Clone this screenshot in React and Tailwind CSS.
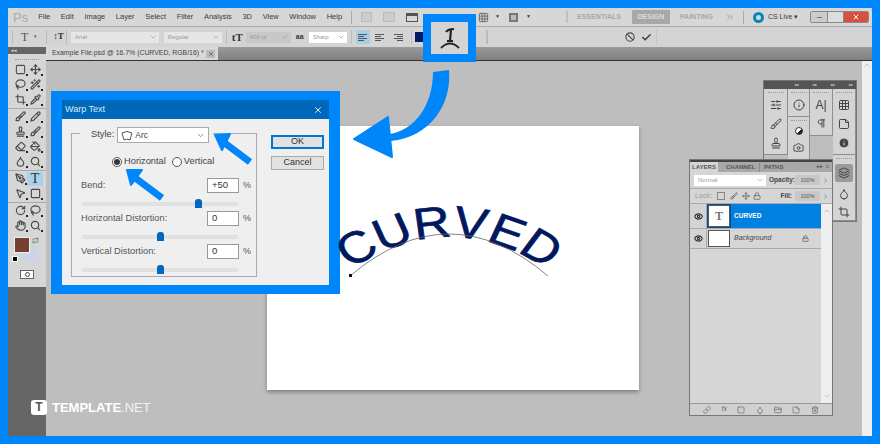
import {
  Check,
  ChevronDown,
  ChevronRight,
  ChevronUp,
  ChevronsRight,
  Ban,
  Lock,
  Move,
  Brush,
  Eye,
  Info,
  Pilcrow,
  X,
  Minus,
  Link,
  FolderClosed,
  StickyNote,
  Trash2,
  Crop,
  Pipette,
  Stamp,
  Eraser,
  PaintBucket,
  Droplet,
  Search,
  Hand,
  Lasso,
  Wand2,
  Pencil,
  PenTool,
  MousePointer2,
  Square,
  RotateCw,
  Camera,
  Layers,
  SlidersHorizontal,
  Grid3x3,
  Repeat,
} from "lucide-react";

const menus = ["File", "Edit", "Image", "Layer", "Select", "Filter", "Analysis", "3D", "View", "Window", "Help"];

const tools = [
  [Square, Move],
  [Lasso, Wand2],
  [Crop, Pipette],
  null,
  [Brush, Pencil],
  [Stamp, Brush],
  [Eraser, PaintBucket],
  [Droplet, Search],
  null,
  [PenTool, "T"],
  [MousePointer2, Square],
  null,
  [RotateCw, Lasso],
  [Hand, Search],
];

const Sep = ({ className = "" }) => <div className={`h-[14px] w-px shrink-0 bg-[#bbb] ${className}`} />;

const Dropdown = ({ label, className }) => (
  <div className={`flex h-[11px] shrink-0 items-center justify-between bg-[#e6e6e6] pl-1 pr-0.5 text-[6px] text-[#9a9a9a] ${className}`}>
    <span>{label}</span>
    <ChevronDown size={8} className="text-[#9a9a9a]" />
  </div>
);

const AlignIcon = ({ className = "items-center" }) => (
  <div className={`flex w-[10px] shrink-0 flex-col gap-px ${className}`}>
    <div className="h-px w-[9px] bg-[#555]" />
    <div className="h-px w-[6px] bg-[#555]" />
    <div className="h-px w-[9px] bg-[#555]" />
    <div className="h-px w-[6px] bg-[#555]" />
  </div>
);

const Slider = ({ thumb }) => (
  <div className="relative mx-[1px] mt-[9px] h-[4px] w-[156px] bg-[#e0e2e2]">
    <div className={`absolute top-[-3px] h-[9px] w-[7px] rounded-t-[3px] bg-[#0068c0] ${thumb}`} />
  </div>
);

const DistortRow = ({ label, value }) => (
  <div className="flex h-[15px] items-center">
    <span className="w-[126px] text-[9.3px] text-[#555]">{label}</span>
    <div className="flex h-[15px] w-[32px] items-center border border-[#999] bg-white px-[4px] text-[9.5px] text-[#333]">{value}</div>
    <span className="ml-[4px] text-[9px] text-[#555]">%</span>
  </div>
);

const DockCell = ({ children, className = "" }) => (
  <div className={`flex flex-col items-center gap-[7px] border-r border-b border-[#8f8f8f] bg-[#d4d4d4] pt-[3px] text-[#444] ${className}`}>
    <div className="mb-[-1px] h-px w-[16px] border-t border-dotted border-[#999]" />
    {children}
  </div>
);

const LayerRow = ({ active, name, italic, children }) => (
  <div className={`flex items-center border-b border-[#aaa] ${active ? "h-[25px] bg-[#0080e0]" : "h-[20px]"}`}>
    <div className="flex h-full w-[17px] items-center justify-center border-r border-[#aaa] bg-[#d4d4d4]">
      <Eye size={9} strokeWidth={3} className="text-[#333]" />
    </div>
    <div className={`ml-[1px] flex w-[22px] items-center justify-center border border-[#555] bg-white font-['Liberation_Serif',serif] text-[12px] font-bold text-[#777] ${active ? "h-[22px] outline outline-[#0a4f90]" : "h-[17px]"}`}>
      {active ? "T" : ""}
    </div>
    <span className={`ml-[4px] flex-1 ${active ? "text-[6.5px] font-bold text-white" : ""} ${italic ? "text-[7px] italic text-[#444]" : ""}`}>{name}</span>
    {children}
  </div>
);

export default function App() {
  return (
    <div className="h-[444px] w-[880px] overflow-hidden bg-[#0086fb] p-[8px] font-['Liberation_Sans',sans-serif]">
      <div className="relative flex h-[428px] w-[864px] flex-col overflow-hidden bg-[#bebebe]">
        {/* Menu bar */}
        <div className="flex h-[18px] items-center whitespace-nowrap bg-[#d7d7d7] text-[7.5px] text-[#3c3c3c]">
          <span className="ml-[5px] mr-[10px] text-[13px] leading-none text-[#aaa]">Ps</span>
          <div className="flex gap-[10.6px] pr-[9px]">
            {menus.map((m) => (
              <span key={m}>{m}</span>
            ))}
          </div>
          <div className="h-[13px] w-px shrink-0 bg-[#aaa]" />
          <div className="ml-[9px] h-[10px] w-[11px] shrink-0 border border-[#bbb] bg-[#ccc]" />
          <div className="ml-[11px] h-[10px] w-[12px] shrink-0 border border-[#bbb] bg-[#ccc]" />
          <div className="ml-[11px] h-[9px] w-[12px] shrink-0 border border-[#555] border-t-[3px]" />
          <Grid3x3 size={11} className="ml-[60px] shrink-0 text-[#666]" />
          <span className="ml-[6px] text-[5px]">▼</span>
          <div className="ml-[9px] h-[9px] w-[9px] shrink-0 border-2 border-[#777] bg-[#bbb]" />
          <span className="ml-[8px] text-[5px]">▼</span>
          <div className="ml-[35px] h-[12px] w-[2px] shrink-0 bg-[#c0c0c0]" />
          <span className="ml-[9px] text-[7px] font-bold text-[#a8a8a8]">ESSENTIALS</span>
          <span className="ml-[11px] flex h-[14px] w-[38px] shrink-0 items-center justify-center bg-[#a8a8a8] text-[7px] font-bold text-[#ddd]">DESIGN</span>
          <span className="ml-[10px] text-[7px] font-bold text-[#a8a8a8]">PAINTING</span>
          <ChevronsRight size={10} className="ml-[12px] shrink-0 text-[#999]" />
          <div className="ml-[8px] h-[13px] w-px shrink-0 bg-[#aaa]" />
          <div className="ml-[9px] h-[11px] w-[11px] shrink-0 rounded-full border-[3px] border-[#0a84b8]" />
          <span className="ml-[4px] text-[7px]">CS Live ▾</span>
          <div className="ml-auto mr-[3px] flex h-[12px] w-[59px] shrink-0 overflow-hidden rounded-[2px] border border-[#888]">
            <div className="flex w-[16px] items-end justify-center bg-[#ccc] pb-[1px]">
              <Minus size={7} />
            </div>
            <div className="w-[17px] border-x border-[#888] bg-[#ddd]" />
            <div className="flex flex-1 items-center justify-center bg-[#d85040]">
              <X size={8} strokeWidth={3} className="text-white" />
            </div>
          </div>
        </div>

        {/* Options bar */}
        <div className="flex h-[21px] items-center whitespace-nowrap border-t border-[#aaa] bg-[#d4d4d4] text-[#555]">
          <Sep className="ml-[4px]" />
          <span className="ml-[8px] font-['Liberation_Serif',serif] text-[12px]">T</span>
          <span className="ml-[6px] text-[5px]">▾</span>
          <Sep className="ml-[9px]" />
          <span className="ml-[6px] font-['Liberation_Serif',serif] text-[9px] font-bold text-[#333]">↕T</span>
          <Sep className="ml-[2px]" />
          <Dropdown label="Arial" className="ml-[4px] w-[88px]" />
          <Dropdown label="Regular" className="ml-[5px] w-[58px]" />
          <Sep className="ml-[4px]" />
          <span className="ml-[5px] font-['Liberation_Serif',serif] text-[11px] font-bold text-[#333]">tT</span>
          <Dropdown label="400 pt" className="ml-[3px] w-[45px] !bg-[#c8c8c8]" />
          <span className="ml-[5px] text-[7px] font-bold text-[#333]">aa</span>
          <Dropdown label="Sharp" className="ml-[5px] w-[38px] !bg-white" />
          <Sep className="ml-[4px]" />
          <div className="ml-[4px] flex h-[14px] w-[14px] shrink-0 items-center justify-center bg-[#a9cfe6]">
            <AlignIcon className="items-start" />
          </div>
          <AlignIcon className="ml-[5px]" />
          <AlignIcon className="ml-[8px] items-end" />
          <Sep className="ml-[8px]" />
          <div className="ml-[3px] h-[10px] w-[14px] shrink-0 bg-[#001a66]" />
          <div className="ml-[57px] h-[14px] w-[2px] shrink-0 bg-[#bbb]" />
          <Ban size={10} strokeWidth={2.6} className="ml-[137px] shrink-0 text-[#444]" />
          <Check size={11} strokeWidth={3.4} className="ml-[6px] shrink-0 text-[#444]" />
          <div className="ml-[4px] h-[16px] w-px shrink-0 bg-[#c4c4c4]" />
        </div>

        {/* Body */}
        <div className="flex min-h-0 flex-1">
          <aside className="flex w-[38px] shrink-0 flex-col bg-[#666]">
            <div className="flex h-[7px] items-center px-[3px] text-[5px] leading-none text-[#ddd]">◂◂</div>
            <div className="flex h-[233px] flex-col items-center bg-[#d6d6d6] pt-[5px]">
              <div className="mb-[2px] h-px w-[24px] border-t border-dotted border-[#999]" />
              {tools.map((row, i) =>
                row ? (
                  <div key={i} className="flex h-[15px] w-[34px] items-center justify-between pl-[3px] pr-[1px]">
                    {row.map((Icon, j) =>
                      Icon === "T" ? (
                        <div key={j} className="flex h-[14px] w-[17px] items-center justify-center bg-[#a8d2e8] font-['Liberation_Serif',serif] text-[14px] text-[#333]">
                          T
                        </div>
                      ) : (
                        <div key={j} className="relative flex w-[15px] justify-center">
                          <Icon size={11} strokeWidth={2.5} strokeDasharray={i === 0 && j === 0 ? "2 2" : undefined} className="text-[#4a4a4a]" />
                          <div className="absolute bottom-[-1px] right-0 h-[2px] w-[2px] bg-[#222]" />
                        </div>
                      )
                    )}
                  </div>
                ) : (
                  <div key={i} className="mt-[1px] h-px w-full bg-[#aaa]" />
                )
              )}
              <div className="relative mt-[4px] h-[26px] w-[30px] shrink-0">
                <div className="absolute left-[9px] top-[8px] h-[16px] w-[17px] bg-[#ccd4e8]" />
                <div className="absolute left-[2px] top-0 h-[16px] w-[16px] border border-[#eee] bg-[#744030]" />
                <div className="absolute left-0 top-[19px] h-[6px] w-[6px] border border-white bg-black" />
                <Repeat size={7} className="absolute left-[20px] top-0 text-[#555]" />
              </div>
              <div className="mt-[7px] flex h-[9px] w-[14px] items-center justify-center border border-[#666] bg-white">
                <div className="h-[5px] w-[5px] rounded-full border border-[#444]" />
              </div>
            </div>
          </aside>

          <main className="flex min-w-0 flex-1 flex-col">
            <div className="flex h-[13px] bg-gradient-to-b from-[#9a9a9a] to-[#808080]">
              <div className="flex w-[172px] items-center justify-between bg-[#d8d8d8] pl-[6px] pr-[3px] text-[6.9px] whitespace-nowrap text-[#444]">
                <span>Example File.psd @ 16.7% (CURVED, RGB/16) *</span>
                <div className="flex h-[8px] w-[9px] items-center justify-center bg-[#bbb]">
                  <X size={6} strokeWidth={3} className="text-[#555]" />
                </div>
              </div>
            </div>
            <div className="h-px bg-[#333]" />
            <div className="flex min-h-0 flex-1 items-start justify-end">
              <div className="h-full w-[10px] bg-[#efefef]">
                <ChevronUp size={8} className="ml-[1px] text-[#aaa]" />
              </div>
            </div>
          </main>
        </div>

        {/* Canvas document */}
        <div className="absolute left-[259px] top-[118px] h-[264px] w-[372px] bg-white shadow-[0_2px_4px_rgba(0,0,0,0.35)]" />

        {/* Callout with warp icon */}
        <div className="absolute left-[415px] top-[6px] flex h-[48px] w-[53px] items-center justify-center border-[8px] border-[#0086fb] bg-[#d4d4d4]">
          <svg width="22" height="24" viewBox="0 0 22 24" className="text-[#222]">
            <path d="M7 6 Q9 3 15 3 M12 3 L11 15 M8 15 L14 15" stroke="currentColor" strokeWidth="2.2" fill="none" />
            <path d="M2 22 Q11 13 20 22" stroke="currentColor" strokeWidth="1.8" fill="none" />
          </svg>
        </div>

        {/* Warp Text dialog */}
        <div className="absolute left-[43px] top-[83px] flex h-[203px] w-[289px] flex-col border-x-[11px] border-y-[9px] border-[#0086fb] bg-[#efefef]">
          <div className="flex h-[19px] shrink-0 items-center justify-between bg-[#0068b8] pl-[3px] pr-[6px] text-[9px] text-[#d9ecfa]">
            <span>Warp Text</span>
            <X size={10} className="text-white" />
          </div>
          <div className="flex flex-1">
            <div className="ml-[9px] mt-[14px] h-[144px] w-[186px] border border-[#aaa]">
              <div className="ml-[8px] -mt-[7px] flex w-[133px] items-center bg-[#efefef]">
                <span className="ml-[11px] text-[9.3px] text-[#444]">Style:</span>
                <div className="ml-[3px] flex h-[16px] w-[92px] shrink-0 items-center border border-[#aaa] bg-white px-[3px] text-[8.5px] text-[#444]">
                  <svg width="12" height="11" viewBox="0 0 12 11" fill="none" stroke="#555">
                    <path d="M1 3 Q6 0 11 3 L9 10 Q6 8 3 10 Z" />
                  </svg>
                  <span className="ml-[2px]">Arc</span>
                  <ChevronDown size={9} className="ml-auto text-[#666]" />
                </div>
              </div>
              <div className="ml-[40px] mt-[13px] flex h-[12px] items-center text-[9.3px] text-[#444]">
                <div className="flex h-[10px] w-[10px] items-center justify-center rounded-full border border-[#555] bg-white">
                  <div className="h-[6px] w-[6px] rounded-full bg-[#333]" />
                </div>
                <span className="ml-[2px]">Horizontal</span>
                <div className="ml-[6px] h-[10px] w-[10px] rounded-full border border-[#555] bg-white" />
                <span className="ml-[2px]">Vertical</span>
              </div>
              <div className="mt-[10px] flex flex-col pl-[9px]">
                <DistortRow label="Bend:" value="+50" />
                <Slider thumb="left-[113px]" />
                <div className="mt-[5px]">
                  <DistortRow label="Horizontal Distortion:" value="0" />
                </div>
                <Slider thumb="left-[75px]" />
                <div className="mt-[5px]">
                  <DistortRow label="Vertical Distortion:" value="0" />
                </div>
                <Slider thumb="left-[75px]" />
              </div>
            </div>
            <div className="ml-[14px] mt-[16px] flex w-[53px] flex-col gap-[7px] text-[9px] text-[#333]">
              <button className="flex h-[14px] items-center justify-center border-2 border-[#0078d0] bg-[#e1e1e1]">OK</button>
              <button className="flex h-[14px] items-center justify-center border border-[#aaa] bg-[#e1e1e1]">Cancel</button>
            </div>
          </div>
        </div>

        {/* Icon dock */}
        <div className="absolute left-[755px] top-[72px] flex w-[94px] flex-col border border-[#777]">
          <div className="flex h-[8px] items-center justify-end gap-[14px] bg-[#555] pr-[3px] text-[4px] text-[#ddd]">
            <span>▸▸</span>
            <span>▸▸</span>
            <span>▸▸</span>
            <span>▸▸</span>
          </div>
          <div className="flex h-[132px] items-start">
            <DockCell className="h-[66px] w-[24px]">
              <SlidersHorizontal size={12} />
              <Brush size={12} />
              <Stamp size={12} />
            </DockCell>
            <div className="flex w-[22px] flex-col">
              <DockCell className="h-[28px]">
                <Info size={12} />
              </DockCell>
              <DockCell className="h-[44px]">
                <div className="h-[8px] w-[8px] rounded-full border border-[#333] bg-[linear-gradient(135deg,#fff_50%,#222_50%)]" />
                <Camera size={11} />
              </DockCell>
            </div>
            <DockCell className="h-[47px] w-[23px]">
              <span className="text-[12px] leading-[12px]">A|</span>
              <Pilcrow size={11} />
            </DockCell>
            <div className="flex w-[23px] flex-col">
              <DockCell className="h-[66px]">
                <Grid3x3 size={12} />
                <StickyNote size={12} />
                <Info size={12} fill="#444" className="text-[#ddd]" />
              </DockCell>
              <DockCell className="h-[66px] !gap-[6px]">
                <div className="rounded-[2px] bg-[#999] p-[3px]">
                  <Layers size={12} />
                </div>
                <Droplet size={12} />
                <Crop size={12} />
              </DockCell>
            </div>
          </div>
        </div>

        {/* Layers panel */}
        <div className="absolute left-[681px] top-[151px] flex h-[257px] w-[144px] flex-col border border-[#777] bg-[#d6d6d6] text-[#555]">
          <div className="h-[2px] bg-[#444]" />
          <div className="flex h-[10px] items-center whitespace-nowrap bg-[#a8a8a8] text-[6px] font-bold">
            <span className="flex h-full w-[28px] items-center justify-center bg-[#d6d6d6]">LAYERS</span>
            <span className="ml-[8px] w-[33px]">CHANNEL</span>
            <span className="border-l border-[#888] pl-[4px]">PATHS</span>
            <span className="ml-auto pr-[3px] text-[5px]">▸▸ &nbsp;≡</span>
          </div>
          <div className="flex h-[17px] items-center border-b border-[#aaa] pl-[4px] pr-[3px] text-[6.5px]">
            <Dropdown label="Normal" className="w-[72px] !bg-white" />
            <span className="ml-[3px] font-bold text-[#444]">Opacity:</span>
            <span className="ml-auto flex h-[10px] w-[25px] items-center justify-center bg-[#c8c8c8] text-[5.5px]">100%</span>
            <ChevronRight size={7} className="ml-[2px]" />
          </div>
          <div className="flex h-[15px] items-center border-b border-[#aaa] pl-[5px] pr-[3px] text-[6.5px]">
            <span className="font-bold text-[#aaa]">Lock:</span>
            <div className="ml-[5px] h-[8px] w-[8px] border border-[#888]" />
            <Brush size={8} className="ml-[5px]" />
            <Move size={8} className="ml-[4px]" />
            <Lock size={8} className="ml-[3px]" />
            <span className="ml-auto font-bold text-[#444]">Fill:</span>
            <span className="ml-[3px] flex h-[10px] w-[25px] items-center justify-center bg-[#c8c8c8] text-[5.5px]">100%</span>
            <ChevronRight size={7} className="ml-[2px]" />
          </div>
          <div className="flex min-h-0 flex-1">
            <div className="flex flex-1 flex-col">
              <LayerRow active name="CURVED" />
              <LayerRow italic name="Background">
                <Lock size={7} className="mr-[12px] text-[#444]" />
              </LayerRow>
            </div>
            <div className="flex w-[11px] flex-col items-center justify-between bg-[#efefef] py-[3px] text-[#aaa]">
              <ChevronUp size={8} />
              <ChevronDown size={8} />
            </div>
          </div>
          <div className="flex h-[12px] items-center justify-around border-t border-[#999] bg-[#d0d0d0] px-[8px] text-[#666]">
            <Link size={8} />
            <span className="text-[7px] italic">fx</span>
            <Square size={8} />
            <Droplet size={8} />
            <FolderClosed size={8} />
            <StickyNote size={8} />
            <Trash2 size={8} />
          </div>
        </div>

        {/* Warp result and arrows */}
        <svg className="pointer-events-none absolute inset-0" width="864" height="428" viewBox="8 8 864 428">
          <g transform="translate(449 0) scale(1.16 1)">
            <path id="warp-base" d="M-100 282 Q0 192 100 282" fill="none" />
            <text fontFamily="'Liberation Sans', sans-serif" fontSize="44" fill="#00185e" stroke="#00185e" strokeWidth="0.7" textAnchor="middle">
              <textPath href="#warp-base" startOffset="50%">CURVED</textPath>
            </text>
          </g>
          <path d="M350 276 Q449 192 548 276" fill="none" stroke="#666" strokeWidth="0.8" />
          <rect x="349" y="274" width="3" height="3" fill="#111" />
          <path d="M433 72 L449 70 C452 105 430 137 391 141 L390 134 C415 130 433 105 433 72 Z" fill="#0086fb" />
          <path d="M354 139 L388 117 L392 157 Z" fill="#0086fb" stroke="#0086fb" strokeWidth="2" strokeLinejoin="round" />
          <path d="M250 162 L222 141" stroke="#0086fb" strokeWidth="7" />
          <path d="M215 135 L230 134 L222 150 Z" fill="#0086fb" stroke="#0086fb" strokeWidth="2" strokeLinejoin="round" />
          <path d="M162 198 L134 177" stroke="#0086fb" strokeWidth="7" />
          <path d="M127 170 L142 170 L131 185 Z" fill="#0086fb" stroke="#0086fb" strokeWidth="2" strokeLinejoin="round" />
        </svg>

        {/* Watermark */}
        <div className="absolute bottom-[19px] left-[23px] flex items-center gap-[5px] text-white">
          <div className="flex h-[15px] w-[16px] items-center justify-center rounded-[3px] bg-white text-[12px] font-black leading-none text-[#555]">T</div>
          <span className="text-[13px] font-bold">
            TEMPLATE<span className="font-normal opacity-80">.NET</span>
          </span>
        </div>
      </div>
    </div>
  );
}
